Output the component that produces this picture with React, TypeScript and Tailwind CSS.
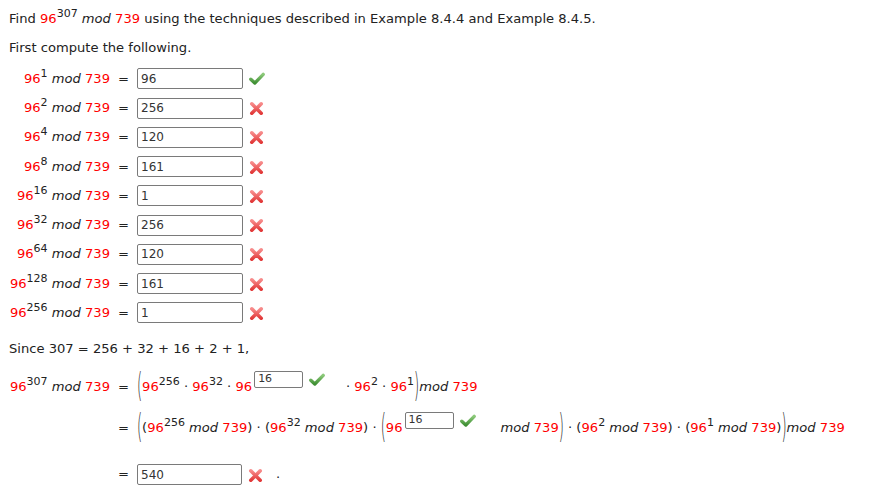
import type { ReactNode } from "react";

const RED = "text-[#ff0000]";

function Check() {
  return (
    <svg width="16" height="14" viewBox="0 0 16 14" className="inline-block shrink-0 align-middle">
      <defs>
        <linearGradient id="ck" x1="0" y1="0" x2="0" y2="1">
          <stop offset="0" stopColor="#8cc97a" />
          <stop offset="1" stopColor="#3f8f33" />
        </linearGradient>
      </defs>
      <path d="M1.8 7.2 L5.8 11 L14.2 2.4" fill="none" stroke="url(#ck)" strokeWidth="3.4" strokeLinecap="round" strokeLinejoin="round" />
    </svg>
  );
}

function Cross() {
  return (
    <svg width="15" height="15" viewBox="0 0 15 15" className="inline-block shrink-0 align-middle">
      <defs>
        <linearGradient id="cx" x1="0" y1="0" x2="0" y2="1">
          <stop offset="0" stopColor="#f78a8a" />
          <stop offset="1" stopColor="#e23a3a" />
        </linearGradient>
      </defs>
      <path d="M2.8 2.8 L12.2 12.2 M12.2 2.8 L2.8 12.2" fill="none" stroke="url(#cx)" strokeWidth="3.6" strokeLinecap="round" />
    </svg>
  );
}

function Pow({ e }: { e: string }) {
  return (
    <span className="whitespace-nowrap">
      <span className={RED}>96</span>
      <span className="relative -top-[6px] text-[11px]">{e}</span>
    </span>
  );
}

function Mod() {
  return (
    <span className="whitespace-nowrap">
      <i>mod</i> <span className={RED}>739</span>
    </span>
  );
}

// tall thin delimiter: stretch the glyph vertically only
function Big({ c }: { c: string }) {
  return <span className="inline-block scale-y-[2.6] font-light">{c}</span>;
}

function Box({ value, w = "w-[106px]" }: { value: string; w?: string }) {
  return (
    <input
      readOnly
      value={value}
      className={`${w} h-[21px] rounded-[2px] border border-[#7a7a7a] bg-white px-[3px] align-middle text-[12px] text-[#333] outline-none`}
    />
  );
}

function SupBox() {
  return (
    <>
      <input
        readOnly
        value="16"
        className="relative -top-[8px] ml-[2px] h-[17px] w-[49px] rounded-[2px] border border-[#7a7a7a] bg-white px-[3px] align-middle text-[11px] text-[#333] outline-none"
      />
      <span className="relative -top-[8px] ml-[6px] inline-block align-middle">
        <Check />
      </span>
    </>
  );
}

function Row({ label, children, h = "h-[29.25px]" }: { label?: ReactNode; children: ReactNode; h?: string }) {
  return (
    <div className={`flex ${h} items-center`}>
      <div className="w-[101px] whitespace-nowrap text-right">{label}</div>
      <div className="w-[27px] text-center">=</div>
      <div className="flex items-center">
        <span className="whitespace-pre leading-[24px]">{children}</span>
      </div>
    </div>
  );
}

const powers: [string, string, boolean][] = [
  ["1", "96", true],
  ["2", "256", false],
  ["4", "120", false],
  ["8", "161", false],
  ["16", "1", false],
  ["32", "256", false],
  ["64", "120", false],
  ["128", "161", false],
  ["256", "1", false],
];

export default function App() {
  return (
    <div className="min-h-screen bg-white px-[9px] pt-[9px] font-['DejaVu_Sans',sans-serif] text-[13.1px] text-[#222]">
      <p className="h-[20px] leading-[20px]">
        Find <Pow e="307" /> <Mod /> using the techniques described in Example 8.4.4 and Example 8.4.5.
      </p>
      <p className="mt-[9px] h-[20px] leading-[20px]">First compute the following.</p>

      <div className="mt-[6px]">
        {powers.map(([e, v, ok]) => (
          <Row
            key={e}
            label={
              <>
                <Pow e={e} /> <Mod />
              </>
            }
          >
            <Box value={v} />
            <span className="ml-[6px] inline-block align-middle">{ok ? <Check /> : <Cross />}</span>
          </Row>
        ))}
      </div>

      <p className="mt-[12px] h-[20px] leading-[20px]">Since 307 = 256 + 32 + 16 + 2 + 1,</p>

      <div className="mt-[10px]">
        <Row
          h="h-[36px]"
          label={
            <>
              <Pow e="307" /> <Mod />
            </>
          }
        >
          <Big c="(" />
          <Pow e="256" />
          {" · "}
          <Pow e="32" />
          {" · "}
          <span className={RED}>96</span>
          <SupBox />
          {"     · "}
          <Pow e="2" />
          {" · "}
          <Pow e="1" />
          <Big c=")" />
          <Mod />
        </Row>

        <div className="mt-[5px]">
          <Row h="h-[36px]">
            <Big c="(" />
            {"("}
            <Pow e="256" /> <Mod />
            {") · ("}
            <Pow e="32" /> <Mod />
            {") · "}
            <Big c="(" />
            <span className={RED}>96</span>
            <SupBox />
            {"      "}
            <Mod />
            <Big c=")" />
            {" · ("}
            <Pow e="2" /> <Mod />
            {") · ("}
            <Pow e="1" /> <Mod />
            {")"}
            <Big c=")" />
            <Mod />
          </Row>
        </div>

        <div className="mt-[16px]">
          <Row h="h-[24px]">
            <Box value="540" w="w-[105px]" />
            <span className="ml-[6px] inline-block align-middle">
              <Cross />
            </span>
            <span className="ml-[13px]">.</span>
          </Row>
        </div>
      </div>
    </div>
  );
}
